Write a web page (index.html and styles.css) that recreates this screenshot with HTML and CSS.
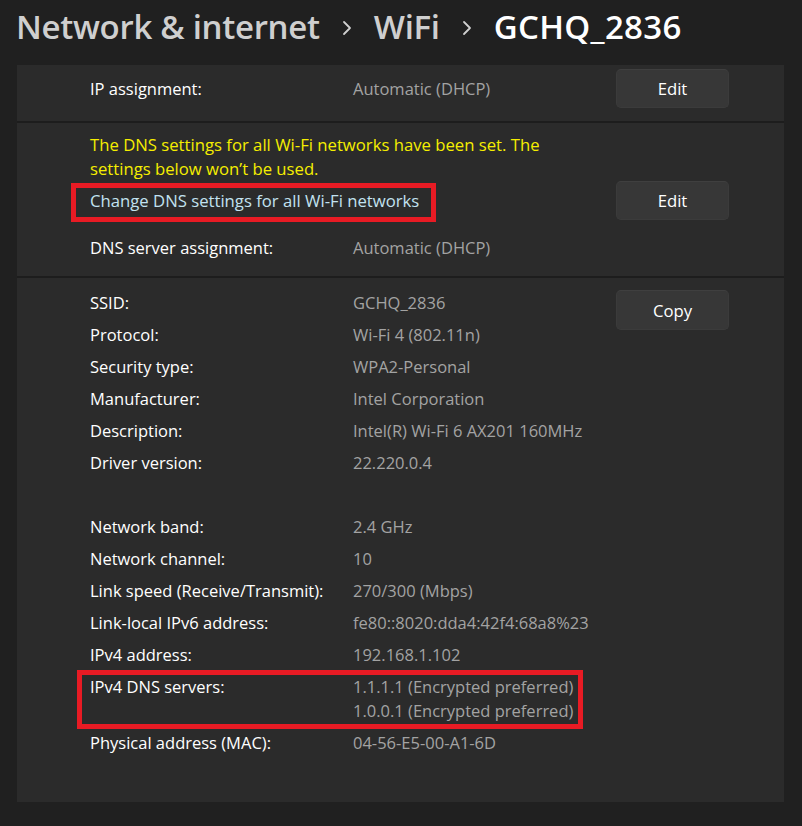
FILE: index.html
```html
<!DOCTYPE html>
<html lang="en">
<head>
<meta charset="utf-8">
<title>WiFi properties</title>
<link rel="stylesheet" href="styles.css">
</head>
<body>
<header class="breadcrumb">
  <span class="crumb">Network &amp; internet</span>
  <svg class="chev" width="10" height="16" viewBox="0 0 10 16"><polyline points="2,2 8,8 2,14" fill="none" stroke="#cfcfcf" stroke-width="1.8" stroke-linecap="round" stroke-linejoin="round"/></svg>
  <span class="crumb">WiFi</span>
  <svg class="chev" width="10" height="16" viewBox="0 0 10 16"><polyline points="2,2 8,8 2,14" fill="none" stroke="#cfcfcf" stroke-width="1.8" stroke-linecap="round" stroke-linejoin="round"/></svg>
  <span class="crumb current">GCHQ_2836</span>
</header>

<main class="card">
  <section class="section s-ip">
    <div class="row row-btn">
      <span class="label">IP assignment:</span>
      <span class="value">Automatic (DHCP)</span>
      <button class="btn">Edit</button>
    </div>
  </section>

  <section class="section s-dns">
    <p class="note">The DNS settings for all Wi-Fi networks have been set. The settings below won’t be used.</p>
    <div class="row row-btn">
      <span class="link-wrap"><a class="link">Change DNS settings for all Wi-Fi networks</a></span>
      <button class="btn">Edit</button>
    </div>
    <div class="row row-dns">
      <span class="label">DNS server assignment:</span>
      <span class="value">Automatic (DHCP)</span>
    </div>
  </section>

  <section class="section s-props">
    <div class="row">
      <span class="label">SSID:</span>
      <span class="value">GCHQ_2836</span>
      <button class="btn btn-copy">Copy</button>
    </div>
    <div class="row"><span class="label">Protocol:</span><span class="value">Wi-Fi 4 (802.11n)</span></div>
    <div class="row"><span class="label">Security type:</span><span class="value">WPA2-Personal</span></div>
    <div class="row"><span class="label">Manufacturer:</span><span class="value">Intel Corporation</span></div>
    <div class="row"><span class="label">Description:</span><span class="value">Intel(R) Wi-Fi 6 AX201 160MHz</span></div>
    <div class="row"><span class="label">Driver version:</span><span class="value">22.220.0.4</span></div>
    <div class="row spacer"></div>
    <div class="row"><span class="label">Network band:</span><span class="value">2.4 GHz</span></div>
    <div class="row"><span class="label">Network channel:</span><span class="value">10</span></div>
    <div class="row"><span class="label">Link speed (Receive/Transmit):</span><span class="value">270/300 (Mbps)</span></div>
    <div class="row"><span class="label">Link-local IPv6 address:</span><span class="value">fe80::8020:dda4:42f4:68a8%23</span></div>
    <div class="row"><span class="label">IPv4 address:</span><span class="value">192.168.1.102</span></div>
    <div class="row highlight"><span class="label">IPv4 DNS servers:</span><span class="value">1.1.1.1 (Encrypted preferred)<br>1.0.0.1 (Encrypted preferred)</span></div>
    <div class="row"><span class="label">Physical address (MAC):</span><span class="value">04-56-E5-00-A1-6D</span></div>
  </section>
</main>
</body>
</html>
```

FILE: styles.css
```css
*, *::before, *::after { box-sizing: border-box; }

body {
  margin: 0;
  background: #202020;
  font-family: "Open Sans", "Noto Sans", sans-serif;
  color: #ffffff;
  width: 802px;
  height: 826px;
  overflow: hidden;
}

.breadcrumb {
  display: flex;
  align-items: center;
  gap: 22px;
  height: 65px;
  padding: 0 0 12px 16px;
}

.crumb {
  font-size: 33px;
  font-weight: 600;
  color: #cfcfcf;
  letter-spacing: -0.3px;
  line-height: 44px;
}

.crumb.current { color: #ffffff; letter-spacing: 0.3px; }

.chev { flex: none; margin-top: 2px; }

.card {
  margin: 0 18px 0 17px;
  width: 767px;
  background: #2b2b2b;
}

.section {
  padding-left: 73px;
  border-top: 2px solid #1d1d1d;
}

.section:first-child { border-top: none; }

.row {
  display: grid;
  grid-template-columns: 263px 263px 113px;
  align-items: center;
  font-size: 16.5px;
  line-height: 24px;
}

.label { color: #ffffff; white-space: nowrap; }
.value { color: #a3a3a3; white-space: nowrap; }

.btn {
  grid-column: 3;
  height: 39px;
  width: 113px;
  background: #373737;
  border: 1px solid #3b3b3b;
  border-top-color: #3f3f3f;
  border-radius: 5px;
  color: #ffffff;
  font-family: inherit;
  font-size: 16.7px;
  padding: 0;
}

.s-ip { padding-top: 4px; padding-bottom: 13px; }

.s-dns { padding-top: 10px; padding-bottom: 16px; }

.note {
  margin: 0;
  width: 470px;
  color: #f5ee00;
  font-size: 16.7px;
  line-height: 24px;
}

.link-wrap {
  grid-column: 1 / span 2;
  position: relative;
  justify-self: start;
  font-size: 16.7px;
}

.link {
  color: #c2e2f0;
  text-decoration: none;
}

.link-wrap::after {
  content: "";
  position: absolute;
  left: -19px;
  top: -6px;
  right: -17px;
  bottom: -9px;
  border: 5px solid #e81b24;
  pointer-events: none;
}

.row-dns { margin-top: 16px; }

.s-props {
  padding-top: 13px;
  padding-bottom: 47px;
  display: flex;
  flex-direction: column;
  gap: 8px;
}

.spacer { height: 24px; }

.btn-copy {
  height: 40px;
  align-self: start;
  margin: -1px 0 -15px;
}

.highlight {
  position: relative;
  align-items: start;
}

.highlight::after {
  content: "";
  position: absolute;
  left: -13px;
  top: -5px;
  width: 506px;
  height: 59px;
  border: 5px solid #e81b24;
  pointer-events: none;
}
```
